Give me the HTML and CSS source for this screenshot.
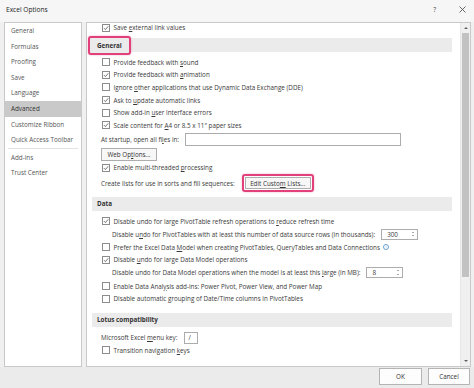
FILE: index.html
```html
<!DOCTYPE html>
<html lang="en">
<head>
  <meta charset="UTF-8" />
  <title>Excel Options</title>
  <link rel="stylesheet" href="styles.css">
</head>
<body>
  <div class="dialog">
    <div class="titlebar">
      <span class="title">Excel Options</span>
      <span class="help">?</span>
      <svg class="close" width="7" height="7" viewBox="0 0 7 7"><path d="M0.5 0.5L6.5 6.5M6.5 0.5L0.5 6.5" stroke="#444" stroke-width="0.8"/></svg>
    </div>

    <div class="main">
      <ul class="nav">
        <li>General</li>
        <li>Formulas</li>
        <li>Proofing</li>
        <li>Save</li>
        <li>Language</li>
        <li class="active">Advanced</li>
        <li>Customize Ribbon</li>
        <li>Quick Access Toolbar</li>
        <li class="sep"></li>
        <li>Add-ins</li>
        <li>Trust Center</li>
      </ul>

      <div class="panel">
        <div class="content">
          <div class="row first"><span class="cb on"></span><span>Save <u>e</u>xternal link values</span></div>

          <div class="section"><span class="hl">General</span></div>
          <div class="row"><span class="cb"></span><span>Provide feedback with <u>s</u>ound</span></div>
          <div class="row"><span class="cb on"></span><span>Provide feedback with <u>a</u>nimation</span></div>
          <div class="row"><span class="cb"></span><span>Ignore <u>o</u>ther applications that use Dynamic Data Exchange (DDE)</span></div>
          <div class="row"><span class="cb on"></span><span>Ask to <u>u</u>pdate automatic links</span></div>
          <div class="row"><span class="cb"></span><span>Show add-in <u>u</u>ser interface errors</span></div>
          <div class="row"><span class="cb on"></span><span>Scale content for <u>A</u>4 or 8.5 x 11" paper sizes</span></div>
          <div class="row tall"><span>At startup, open all fi<u>l</u>es in:</span><span class="textbox"></span></div>
          <div class="row btnrow"><span class="btn web"><span>Web Op<u>t</u>ions...</span></span></div>
          <div class="row"><span class="cb on"></span><span>Enable multi-threaded <u>p</u>rocessing</span></div>
          <div class="row lists"><span>Create lists for use in sorts and fill sequences:</span><span class="hl-btn"><span class="btn"><span>Edit Custo<u>m</u> Lists...</span></span></span></div>

          <div class="section data"><span class="label">Data</span></div>
          <div class="row"><span class="cb on"></span><span>Disable undo for large PivotTable refresh operations to <u>r</u>educe refresh time</span></div>
          <div class="row indent spin-row"><span>Disable u<u>n</u>do for PivotTables with at least this number of data source rows (in thousands):</span><span class="spin">300<i></i></span></div>
          <div class="row"><span class="cb"></span><span>Prefer the Excel Data <u>M</u>odel when creating PivotTables, QueryTables and Data Connections</span><span class="info">i</span></div>
          <div class="row"><span class="cb on"></span><span>Disable <u>u</u>ndo for large Data Model operations</span></div>
          <div class="row indent spin-row"><span>Disable undo for Data Model operations when the model is at least this <u>l</u>arge (in MB):</span><span class="spin">8<i></i></span></div>
          <div class="row"><span class="cb"></span><span>Enable Data Anal<u>y</u>sis add-ins: Power Pivot, Power View, and Power Map</span></div>
          <div class="row"><span class="cb"></span><span>Disable automatic grouping of Date/Time columns in PivotTables</span></div>

          <div class="section lotus"><span class="label">Lotus compatibility</span></div>
          <div class="row keyrow"><span>Microsoft Excel <u>m</u>enu key:</span><span class="keybox">/</span></div>
          <div class="row"><span class="cb"></span><span>Transition navigation <u>k</u>eys</span></div>
        </div>
        <div class="scrollbar">
          <span class="arrow up"></span>
          <span class="thumb"></span>
          <span class="track"></span>
          <span class="arrow down"></span>
        </div>
      </div>
    </div>

    <div class="footer">
      <span class="btn ok">OK</span>
      <span class="btn cancel">Cancel</span>
    </div>
  </div>
</body>
</html>
```

FILE: styles.css
```css
* {
  box-sizing: border-box;
}
body {
  margin: 0;
  font-family: "Open Sans", "Liberation Sans", sans-serif;
  font-size: 6.3px;
  color: #3a3a3a;
  background: #f0f0f0;
}
u {
  text-decoration-thickness: 0.5px;
  text-underline-offset: 1px;
}
.dialog {
  width: 474px;
  height: 388px;
  display: flex;
  flex-direction: column;
  background: #f0f0f0;
}

/* title */
.titlebar {
  height: 22px;
  display: flex;
  align-items: center;
  padding: 0 8px 4px 6px;
  background: #f6f6f6;
}
.title {
  flex: 1;
  font-size: 6.6px;
  color: #222;
}
.help {
  font-size: 6.6px;
  color: #444;
  margin-right: 23px;
}

/* body */
.main {
  height: 345px;
  display: flex;
  gap: 4px;
  padding: 0 3px 0 4px;
}
.nav {
  width: 78px;
  margin: 0;
  padding: 0;
  list-style: none;
  background: #fff;
  border: 1px solid #c9c9c9;
}
.nav li {
  height: 15.6px;
  line-height: 15.6px;
  padding-left: 6px;
  color: #555;
}
.nav li.active {
  background: #c9c9c9;
  color: #333;
}
.nav li.sep {
  height: 1px;
  margin: 0.4px 3px 0.6px;
  background: #e2e2e2;
}
.panel {
  flex: 1;
  display: flex;
  background: #fff;
  border: 1px solid #c9c9c9;
  overflow: hidden;
}
.content {
  flex: 1;
  overflow: hidden;
}

/* rows */
.row {
  height: 12.6px;
  display: flex;
  align-items: center;
  padding-left: 14px;
  white-space: nowrap;
}
.row.first {
  height: 9.5px;
  align-items: flex-start;
}
.row.first .cb {
  margin-top: 0.5px;
}
.row.indent {
  padding-left: 25px;
}
.row.tall {
  height: 15px;
}
.row.btnrow {
  height: 15px;
}
.row.lists {
  height: 18px;
}
.row.spin-row {
  height: 13.5px;
}
.row.keyrow {
  height: 12px;
  margin-top: 5px;
}
.cb {
  width: 8px;
  height: 8px;
  margin: 0 3.5px 0 1px;
  border: 1px solid #8c8c8c;
  background: #fff;
  flex: none;
}
.cb.on {
  background: #fff url("data:image/svg+xml,%3Csvg xmlns='http://www.w3.org/2000/svg' viewBox='0 0 6 6'%3E%3Cpolyline points='0.9,3.1 2.4,4.6 5.2,1.3' fill='none' stroke='%23505050' stroke-width='0.8'/%3E%3C/svg%3E") no-repeat center / 6px 6px;
}

/* section headers */
.section {
  height: 14px;
  margin: 5.5px 8px 4px 5px;
  display: flex;
  align-items: center;
  background: #ebebeb;
  font-weight: 700;
  color: #333;
}
.section .label {
  padding-left: 5px;
}
.section.data {
  margin-top: 4.8px;
}
.section.lotus {
  margin-top: 8px;
  margin-bottom: 5px;
}
.hl {
  height: 19px;
  margin-left: -4px;
  padding: 0 7px;
  display: flex;
  align-items: center;
  border: 2px solid #e1407b;
  border-radius: 3px;
  box-shadow: 0 0 2px rgba(225, 64, 123, 0.45);
  background: #ebebeb;
}

/* controls */
.textbox {
  width: 216px;
  height: 13px;
  margin-left: 6px;
  border: 1px solid #acacac;
  background: #fff;
}
.btn {
  display: flex;
  align-items: center;
  justify-content: center;
  border: 1px solid #adadad;
  background: #f7f7f7;
  color: #333;
}
.btn.web {
  width: 56px;
  height: 13px;
}
.hl-btn {
  margin-left: 7px;
  padding: 1px;
  border: 2px solid #e1407b;
  border-radius: 3px;
  box-shadow: 0 0 2px rgba(225, 64, 123, 0.45);
}
.hl-btn .btn {
  width: 66px;
  height: 12px;
}
.spin {
  position: relative;
  width: 37px;
  height: 11px;
  margin-left: 6px;
  padding-left: 5px;
  display: flex;
  align-items: center;
  border: 1px solid #acacac;
  background: #fff;
}
.spin i {
  position: absolute;
  right: 3px;
  top: 2px;
  width: 0;
  height: 0;
  border-left: 1.5px solid transparent;
  border-right: 1.5px solid transparent;
  border-bottom: 1.5px solid #555;
}
.spin i::after {
  content: "";
  position: absolute;
  left: -1.5px;
  top: 3.5px;
  border-left: 1.5px solid transparent;
  border-right: 1.5px solid transparent;
  border-top: 1.5px solid #555;
}
.info {
  width: 6px;
  height: 6px;
  margin-left: 3px;
  border: 0.7px solid #6a9fd4;
  border-radius: 50%;
  color: #6a9fd4;
  font-size: 4px;
  line-height: 4.6px;
  text-align: center;
}
.keybox {
  width: 14px;
  height: 12px;
  margin-left: 7px;
  padding-left: 3px;
  border: 1px solid #acacac;
  background: #fff;
  display: flex;
  align-items: center;
}

/* scrollbar */
.scrollbar {
  width: 10px;
  display: flex;
  flex-direction: column;
  background: #f0f0f0;
  border-left: 1px solid #e6e6e6;
}
.scrollbar .arrow {
  height: 10px;
  display: flex;
  align-items: center;
  justify-content: center;
  flex: none;
}
.scrollbar .arrow::before {
  content: "";
  border-left: 2px solid transparent;
  border-right: 2px solid transparent;
}
.scrollbar .up::before {
  border-bottom: 2px solid #606060;
}
.scrollbar .down::before {
  border-top: 2px solid #606060;
}
.scrollbar .thumb {
  height: 244px;
  margin: 0 1px;
  background: #c2c2c2;
  flex: none;
}
.scrollbar .track {
  flex: 1;
}

/* footer */
.footer {
  flex: 1;
  display: flex;
  justify-content: flex-end;
  align-items: flex-start;
  gap: 6px;
  padding: 1px 4px 0 0;
  background: #ebebeb;
}
.footer .btn {
  height: 17px;
  background: #fdfdfd;
  border-color: #b4b4b4;
}
.btn.ok {
  width: 43px;
}
.btn.cancel {
  width: 42px;
}
```
